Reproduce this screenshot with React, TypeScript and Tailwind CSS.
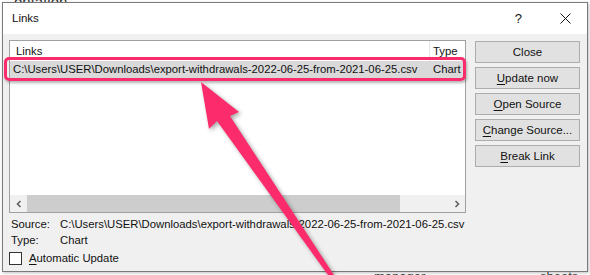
import React from "react";

const FONT = { fontFamily: '"Liberation Sans", Arial, sans-serif' };
const PATH = "C:\\Users\\USER\\Downloads\\export-withdrawals-2022-06-25-from-2021-06-25.csv";

function Btn({ label, u }: { label: string; u?: number }) {
  return (
    <button className="h-[22px] w-[105px] border border-[#adadad] bg-[#e1e1e1] text-[11.5px] leading-[20px] text-[#111]">
      {u === undefined ? (
        label
      ) : (
        <>
          {label.slice(0, u)}
          <span className="underline underline-offset-2">{label[u]}</span>
          {label.slice(u + 1)}
        </>
      )}
    </button>
  );
}

function Chevron({ dir }: { dir: "l" | "r" }) {
  return (
    <svg width="8" height="8" viewBox="0 0 8 8">
      <polyline
        points={dir === "l" ? "5.5,1 2.5,4 5.5,7" : "2.5,1 5.5,4 2.5,7"}
        fill="none"
        stroke="#606060"
        strokeWidth="1.6"
      />
    </svg>
  );
}

export default function App() {
  return (
    <div className="relative h-[275px] w-[590px] overflow-hidden bg-white text-[#111]" style={FONT}>
      {/* desktop behind the dialog */}
      <div className="absolute left-[14px] top-[-9px] text-[15px] text-[#333]">ontation</div>
      <div className="absolute left-[374px] top-[267px] text-[13px] text-[#444]">manager</div>
      <div className="absolute left-[540px] top-[267px] text-[13px] text-[#444]">sheets</div>

      {/* dialog window */}
      <div className="absolute left-[2px] top-[2px] flex h-[270px] w-[586px] flex-col border border-[#7a7a7a] bg-[#f0f0f0] shadow-[1px_1px_3px_rgba(0,0,0,0.25)]">
        <div className="flex h-[31px] items-center bg-white pl-[9px] pr-[16px] text-[11.5px]">
          <span>Links</span>
          <span className="ml-auto mr-[38px] text-[13px]">?</span>
          <svg width="11" height="11" viewBox="0 0 11 11">
            <path d="M0.5 0.5 L10.5 10.5 M10.5 0.5 L0.5 10.5" stroke="#111" strokeWidth="1" />
          </svg>
        </div>

        <div className="flex pl-[6px] pt-[6px]">
          <div className="flex h-[173px] w-[457px] flex-col border border-[#a0a0a0] bg-white text-[11.3px]">
            <div className="flex h-[20px] items-center">
              <div className="w-[419px] pl-[6px]">Links</div>
              <div className="h-full w-px bg-[#e5e5e5]" />
              <div className="pl-[3px]">Type</div>
            </div>
            <div className="flex h-[17px] items-center bg-[#d9d9d9]">
              <div className="w-[420px] pl-[3px] whitespace-nowrap">{PATH}</div>
              <div className="pl-[3px]">Chart</div>
            </div>
            <div className="flex-1" />
            <div className="flex h-[17px] items-center bg-[#f0f0f0]">
              <div className="flex h-full w-[17px] items-center justify-center">
                <Chevron dir="l" />
              </div>
              <div className="h-full w-[373px] bg-[#cdcdcd]" />
              <div className="flex-1" />
              <div className="flex h-full w-[17px] items-center justify-center">
                <Chevron dir="r" />
              </div>
            </div>
          </div>

          <div className="ml-[9px] mt-[1px] flex flex-col gap-[4px]">
            <Btn label="Close" />
            <Btn label="Update now" u={0} />
            <Btn label="Open Source" u={0} />
            <Btn label="Change Source..." u={0} />
            <Btn label="Break Link" u={0} />
          </div>
        </div>

        <div className="flex flex-col pl-[8px] pt-[3px] text-[11.3px] leading-[16px]">
          <div className="flex">
            <span className="w-[49px]">Source:</span>
            <span className="whitespace-nowrap">{PATH}</span>
          </div>
          <div className="flex">
            <span className="w-[49px]">Type:</span>
            <span>Chart</span>
          </div>
          <div className="mt-[2px] flex items-center">
            <span className="ml-[-2px] h-[13px] w-[13px] border border-[#333] bg-white" />
            <span className="ml-[7px]">
              <span className="underline underline-offset-2">A</span>utomatic Update
            </span>
          </div>
        </div>
      </div>

      {/* annotation: highlight box */}
      <div className="absolute left-[4px] top-[57px] h-[24px] w-[462px] rounded-[5px] border-[3px] border-[#fb2c6c] shadow-[1px_2px_3px_rgba(0,0,0,0.3)]" />

      {/* annotation: arrow */}
      <svg
        className="pointer-events-none absolute left-0 top-0"
        width="590"
        height="275"
        style={{ filter: "drop-shadow(2px 2px 2px rgba(0,0,0,0.35))" }}
      >
        <polygon
          points="201,82 239,112 230,116 334,275 328,275 217,121 209,129"
          fill="#fc2c6c"
        />
      </svg>
    </div>
  );
}
